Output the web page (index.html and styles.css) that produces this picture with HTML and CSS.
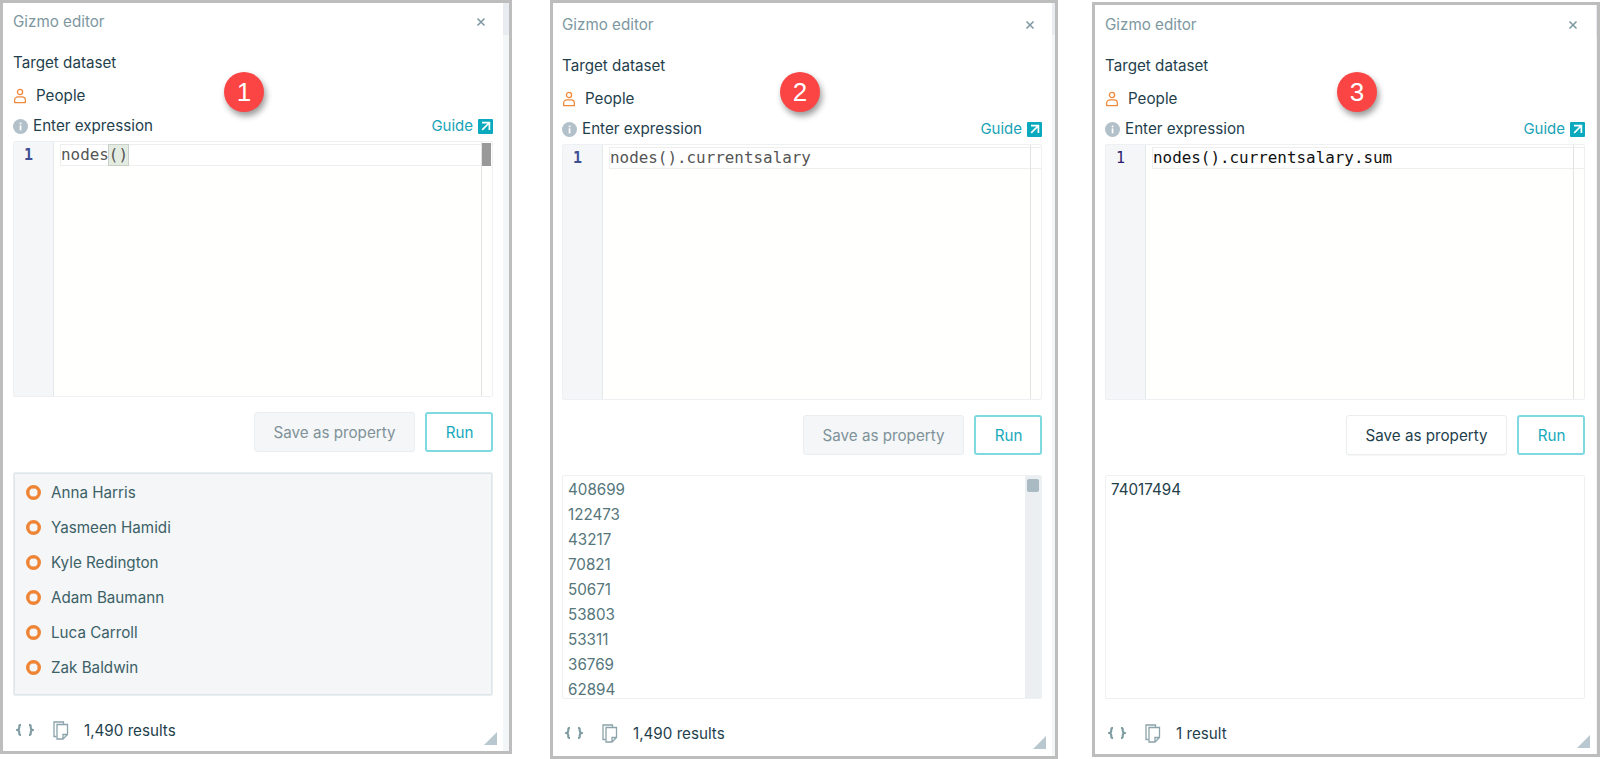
FILE: index.html
```html
<!DOCTYPE html>
<html lang="en">
<head>
<meta charset="utf-8">
<title>Gizmo editor</title>
<link rel="stylesheet" href="styles.css">
</head>
<body>
<svg class="defs" width="0" height="0" aria-hidden="true">
  <symbol id="i-close" viewBox="0 0 10 10"><path d="M1.5 1.5l7 7M8.5 1.5l-7 7" fill="none" stroke="currentColor" stroke-width="1.6"/></symbol>
  <symbol id="i-person" viewBox="0 0 14 16"><circle cx="7" cy="4" r="2.6" fill="none" stroke="currentColor" stroke-width="1.3"/><path d="M1.6 14.6v-2.2c0-2 1.6-3.5 3.5-3.5h3.8c1.900 0 3.500 1.500 3.500 3.500v2.200z" fill="none" stroke="currentColor" stroke-width="1.3" stroke-linejoin="round"/></symbol>
  <symbol id="i-info" viewBox="0 0 15 15"><circle cx="7.500" cy="7.500" r="7.500" fill="currentColor"/><rect x="6.700" y="6.400" width="1.700" height="5" fill="#fff"/><rect x="6.700" y="3.600" width="1.700" height="1.700" fill="#fff"/></symbol>
  <symbol id="i-ext" viewBox="0 0 15 15"><rect width="15" height="15" rx="1" fill="currentColor"/><path d="M4 3.600h7.400v7.400M11 4l-6.800 6.800" fill="none" stroke="#fff" stroke-width="1.700"/></symbol>
  <symbol id="i-braces" viewBox="0 0 18 12"><path d="M5 1C3 1 3.300 2 3.300 3.500S3.200 5.400 1.500 6C3.200 6.600 3.300 7 3.300 8.500S3 11 5 11M13 1c2 0 1.700 1 1.700 2.500s.1 1.900 1.800 2.500c-1.700.6-1.800 1-1.800 2.500S15 11 13 11" fill="none" stroke="currentColor" stroke-width="2.200"/></symbol>
  <symbol id="i-copy" viewBox="0 0 16 19"><path d="M3.500 15.500H1V1h9.500v2" fill="none" stroke="currentColor" stroke-width="1.300"/><path d="M4 3.500h10.500v10l-4.500 4.500H4zM14.500 13.500H10V18" fill="none" stroke="currentColor" stroke-width="1.300"/></symbol>
</svg>
<main class="canvas">

  <section class="panel panel-a">
    <header class="head"><span class="title">Gizmo editor</span><svg class="close"><use href="#i-close"/></svg></header>
    <div class="label">Target dataset</div>
    <div class="dataset"><svg class="person"><use href="#i-person"/></svg><span>People</span></div>
    <div class="expr"><svg class="info"><use href="#i-info"/></svg><span class="expr-text">Enter expression</span><a class="guide">Guide<svg class="ext"><use href="#i-ext"/></svg></a></div>
    <div class="editor">
      <div class="gutter">1</div>
      <div class="code"><div class="line muted">nodes<span class="match">()</span></div></div>
      <div class="rail"><div class="rail-thumb"></div></div>
    </div>
    <div class="actions"><button class="btn btn-off">Save as property</button><button class="btn btn-run">Run</button></div>
    <ul class="results nodes">
      <li class="node"><i class="ring"></i>Anna Harris</li>
      <li class="node"><i class="ring"></i>Yasmeen Hamidi</li>
      <li class="node"><i class="ring"></i>Kyle Redington</li>
      <li class="node"><i class="ring"></i>Adam Baumann</li>
      <li class="node"><i class="ring"></i>Luca Carroll</li>
      <li class="node"><i class="ring"></i>Zak Baldwin</li>
    </ul>
    <footer class="foot"><svg class="braces"><use href="#i-braces"/></svg><svg class="copy"><use href="#i-copy"/></svg><span>1,490 results</span></footer>
    <i class="grip"></i>
    <div class="badge">1</div>
  </section>

  <section class="panel panel-b">
    <header class="head"><span class="title">Gizmo editor</span><svg class="close"><use href="#i-close"/></svg></header>
    <div class="label">Target dataset</div>
    <div class="dataset"><svg class="person"><use href="#i-person"/></svg><span>People</span></div>
    <div class="expr"><svg class="info"><use href="#i-info"/></svg><span class="expr-text">Enter expression</span><a class="guide">Guide<svg class="ext"><use href="#i-ext"/></svg></a></div>
    <div class="editor">
      <div class="gutter">1</div>
      <div class="code"><div class="line muted">nodes().currentsalary</div></div>
      <div class="rail"></div>
    </div>
    <div class="actions"><button class="btn btn-off">Save as property</button><button class="btn btn-run">Run</button></div>
    <div class="results values">
      <ul class="value-list">
        <li>408699</li><li>122473</li><li>43217</li><li>70821</li><li>50671</li><li>53803</li><li>53311</li><li>36769</li><li>62894</li>
      </ul>
      <div class="scroll"><div class="scroll-thumb"></div></div>
    </div>
    <footer class="foot"><svg class="braces"><use href="#i-braces"/></svg><svg class="copy"><use href="#i-copy"/></svg><span>1,490 results</span></footer>
    <i class="grip"></i>
    <div class="badge">2</div>
  </section>

  <section class="panel panel-c">
    <header class="head"><span class="title">Gizmo editor</span><svg class="close"><use href="#i-close"/></svg></header>
    <div class="label">Target dataset</div>
    <div class="dataset"><svg class="person"><use href="#i-person"/></svg><span>People</span></div>
    <div class="expr"><svg class="info"><use href="#i-info"/></svg><span class="expr-text">Enter expression</span><a class="guide">Guide<svg class="ext"><use href="#i-ext"/></svg></a></div>
    <div class="editor">
      <div class="gutter gutter-dark">1</div>
      <div class="code"><div class="line">nodes().currentsalary.sum</div></div>
      <div class="rail"></div>
    </div>
    <div class="actions"><button class="btn">Save as property</button><button class="btn btn-run">Run</button></div>
    <div class="results single">74017494</div>
    <footer class="foot"><svg class="braces"><use href="#i-braces"/></svg><svg class="copy"><use href="#i-copy"/></svg><span>1 result</span></footer>
    <i class="grip"></i>
    <div class="badge">3</div>
  </section>

</main>
</body>
</html>
```
FILE: styles.css
```css
* { box-sizing: border-box; }
html, body { margin: 0; padding: 0; background: #fff; overflow: hidden; }
.defs { position: absolute; }
.canvas {
  display: flex;
  align-items: flex-start;
  width: 1600px;
  height: 759px;
  font-family: Inter, "Liberation Sans", sans-serif;
  font-size: 15.2px;
  color: #1f3f4d;
}
.panel {
  position: relative;
  display: flex;
  flex-direction: column;
  flex: none;
  border: 3px solid #bdbdbd;
  background: #fff;
}
.panel::after {
  content: "";
  position: absolute;
  top: 0;
  right: 0;
  bottom: 0;
  width: var(--strip);
  background: linear-gradient(#e8ecf1 0 32px, #f3f6f7 32px);
}
.panel-a { --strip: 6px; width: 512px; height: 754px; padding-left: 10px; }
.panel-b { --strip: 3px; width: 508px; height: 759px; margin-left: 38px; padding: 3px 0 0 9px; }
.panel-c { --strip: 1px; width: 508px; height: 755px; margin: 2px 0 0 34px; padding: 1px 0 0 10px; }

.head { display: flex; align-items: center; justify-content: space-between; width: 480px; height: 37px; margin-bottom: 1px; }
.title { color: #7d97a1; }
.close { width: 10px; height: 10px; margin: 0 7px 0 0; color: #7f9aa3; }
.label { margin-top: 12px; height: 20px; line-height: 20px; }
.dataset { display: flex; align-items: center; margin-top: 13px; height: 20px; line-height: 20px; }
.person { width: 14px; height: 16px; margin-right: 9px; color: #ef8a3c; }
.expr { display: flex; align-items: center; width: 480px; margin-top: 10px; height: 20px; line-height: 20px; }
.info { width: 15px; height: 15px; margin-right: 5px; color: #b2c0c9; }
.expr-text { flex: 1; }
.guide { display: flex; align-items: center; color: #17a3b8; font-size: 15px; }
.ext { width: 15px; height: 15px; margin-left: 5px; color: #0aa9bd; }

.editor {
  display: flex;
  width: 480px;
  height: 256px;
  margin-top: 5px;
  border: 1px solid #eef1f3;
  border-radius: 2px;
  background: #fffffe;
  font-family: "DejaVu Sans Mono", "Liberation Mono", monospace;
  font-size: 15.9px;
}
.gutter {
  flex: none;
  width: 40px;
  padding: 2px 0 0 10px;
  background: #f4f6f8;
  border-right: 1px solid #e4e9ec;
  color: #3f4f95;
  line-height: 22px;
  font-size: 15px;
  font-weight: 700;
}
.gutter-dark { color: #2c1a6c; font-weight: 400; }
.code { flex: 1; padding: 2px 0 0 6px; min-width: 0; }
.line {
  display: flex;
  height: 22px;
  line-height: 20px;
  border: 1px solid #eeeeee;
  border-right: 0;
  margin-right: -11px;
  color: #111;
  white-space: pre;
  background: #fff;
}
.line.muted { color: #555; }
.match { background: #e4ece2; outline: 1px solid #c9d0c9; }
.rail { position: relative; flex: none; width: 11px; border-left: 1px solid #e3e3e3; }
.rail-thumb { height: 23px; margin-top: 1px; background: #999; width: 9px; }

.actions { display: flex; justify-content: flex-end; gap: 10px; width: 480px; margin-top: 15px; height: 40px; }
.btn {
  width: 161px;
  height: 40px;
  padding: 1px 0 0;
  border: 1px solid #eaeef0;
  border-radius: 3px;
  background: #fff;
  color: #1f3f4d;
  font: inherit;
  box-shadow: 0 1px 1px rgba(0, 0, 0, .04);
}
.btn-off { background: #f4f6f7; color: #7f9299; box-shadow: none; }
.btn-run { width: 68px; padding-left: 1px; border: 2px solid #7fd9e0; color: #17a9bc; box-shadow: none; }

.results { width: 480px; height: 224px; margin: 20px 0 0; padding: 0; list-style: none; border: 1px solid #eef1f3; border-radius: 2px; }
.nodes { border: 1px solid #e9eef0; box-shadow: inset 0 0 0 1px #dfe6ea; background: #f4f6f8; padding: 2px 0 0; color: #3c6166; }
.node { display: flex; align-items: center; height: 35px; padding-left: 12px; }
.ring { width: 15px; height: 15px; margin-right: 10px; border: 3px solid #ee8434; border-radius: 50%; box-shadow: inset 0 0 0 .5px #ee8434; }
.values { display: flex; overflow: hidden; color: #56767b; }
.value-list { flex: 1; margin: 0; padding: 1px 0 0 5px; list-style: none; }
.value-list li { height: 25px; line-height: 25px; }
.scroll { flex: none; width: 16px; background: #ebeff1; padding: 3px 2px 0; }
.scroll-thumb { height: 13px; border-radius: 2px; background: #a9bac3; }
.single { padding: 1px 0 0 5px; line-height: 25px; color: #24404a; }

.foot { display: flex; align-items: center; margin-top: 24px; height: 20px; }
.braces { width: 18px; height: 12px; margin: 0 0 0 3px; color: #7f9ca3; }
.copy { width: 16px; height: 19px; margin: 0 0 0 19px; color: #8ba3aa; }
.foot span { margin-left: 15px; }
.grip { position: absolute; right: 12px; bottom: 6px; width: 0; height: 0; border-style: solid; border-width: 0 0 13px 13px; border-color: transparent transparent #b9c8d0 transparent; }
.panel-b .grip { right: 9px; bottom: 7px; }
.panel-c .grip { right: 7px; bottom: 6px; }

.badge {
  position: absolute;
  top: 69px;
  left: 221px;
  width: 40px;
  height: 40px;
  border-radius: 50%;
  background: #fb4444;
  color: #fff;
  text-align: center;
  line-height: 40px;
  font-family: "Liberation Sans", sans-serif;
  font-size: 26px;
  box-shadow: 2px 4px 6px rgba(0, 0, 0, .4);
}
.panel-b .badge { left: 227px; }
.panel-c .badge { top: 67px; left: 242px; }
```
